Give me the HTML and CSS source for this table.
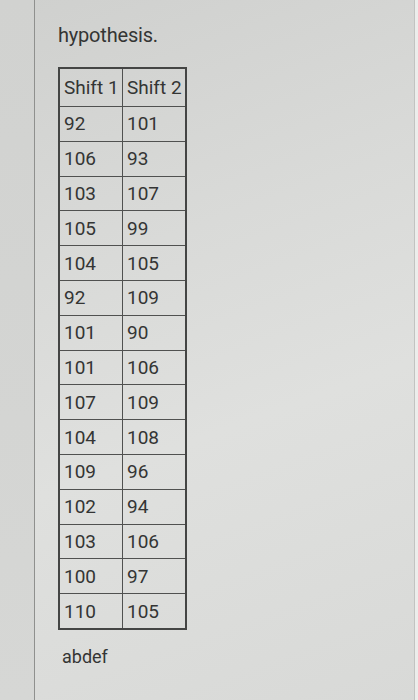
FILE: index.html
```html
<!DOCTYPE html>
<html lang="en">
<head>
<meta charset="utf-8">
<title>Shift data</title>
<link rel="stylesheet" href="styles.css">
</head>
<body>
<div class="screen">
  <aside class="rail"></aside>
  <main class="content">
    <p class="lead">hypothesis.</p>
    <table class="data">
      <thead>
        <tr><th>Shift 1</th><th>Shift 2</th></tr>
      </thead>
      <tbody>
        <tr><td>92</td><td>101</td></tr>
        <tr><td>106</td><td>93</td></tr>
        <tr><td>103</td><td>107</td></tr>
        <tr><td>105</td><td>99</td></tr>
        <tr><td>104</td><td>105</td></tr>
        <tr><td>92</td><td>109</td></tr>
        <tr><td>101</td><td>90</td></tr>
        <tr><td>101</td><td>106</td></tr>
        <tr><td>107</td><td>109</td></tr>
        <tr><td>104</td><td>108</td></tr>
        <tr><td>109</td><td>96</td></tr>
        <tr><td>102</td><td>94</td></tr>
        <tr><td>103</td><td>106</td></tr>
        <tr><td>100</td><td>97</td></tr>
        <tr><td>110</td><td>105</td></tr>
      </tbody>
    </table>
    <p class="note">abdef</p>
  </main>
  <div class="edge"></div>
</div>
</body>
</html>
```
FILE: styles.css
```css
html, body {
  margin: 0;
  padding: 0;
}
body {
  width: 418px;
  height: 700px;
  overflow: hidden;
  font-family: Roboto, "Liberation Sans", sans-serif;
  color: #343534;
  background: #d6d7d5;
}
.screen {
  display: flex;
  height: 700px;
  background: linear-gradient(160deg, #cfd0ce 0%, #d9dad8 35%, #dfe0de 60%, #d8d9d7 100%);
}
.rail {
  width: 34px;
  flex: none;
  border-right: 1px solid #8f908e;
  background: linear-gradient(180deg, #d1d2d0, #d6d7d5);
}
.content {
  flex: 1;
  padding: 23px 0 0 23px;
}
.edge {
  width: 3px;
  flex: none;
  background: #ecedeb;
  border-left: 1px solid #c2c3c1;
}
.lead {
  margin: 0 0 20px 0;
  font-size: 20px;
  line-height: 24px;
  letter-spacing: -0.2px;
}
.data {
  border-collapse: collapse;
  border: 2px solid #444544;
  font-size: 19px;
}
.data th, .data td {
  border: 1.5px solid #505150;
  text-align: left;
  font-weight: 400;
  padding: 0 2px 0 4px;
  height: 33.8px;
}
.data th {
  height: 37px;
  padding-right: 1px;
}
.data td:first-child {
  width: 56px;
}
.data td:last-child {
  width: 56px;
}
.note {
  margin: 17px 0 0 4px;
  font-size: 18px;
  line-height: 20px;
}
```
